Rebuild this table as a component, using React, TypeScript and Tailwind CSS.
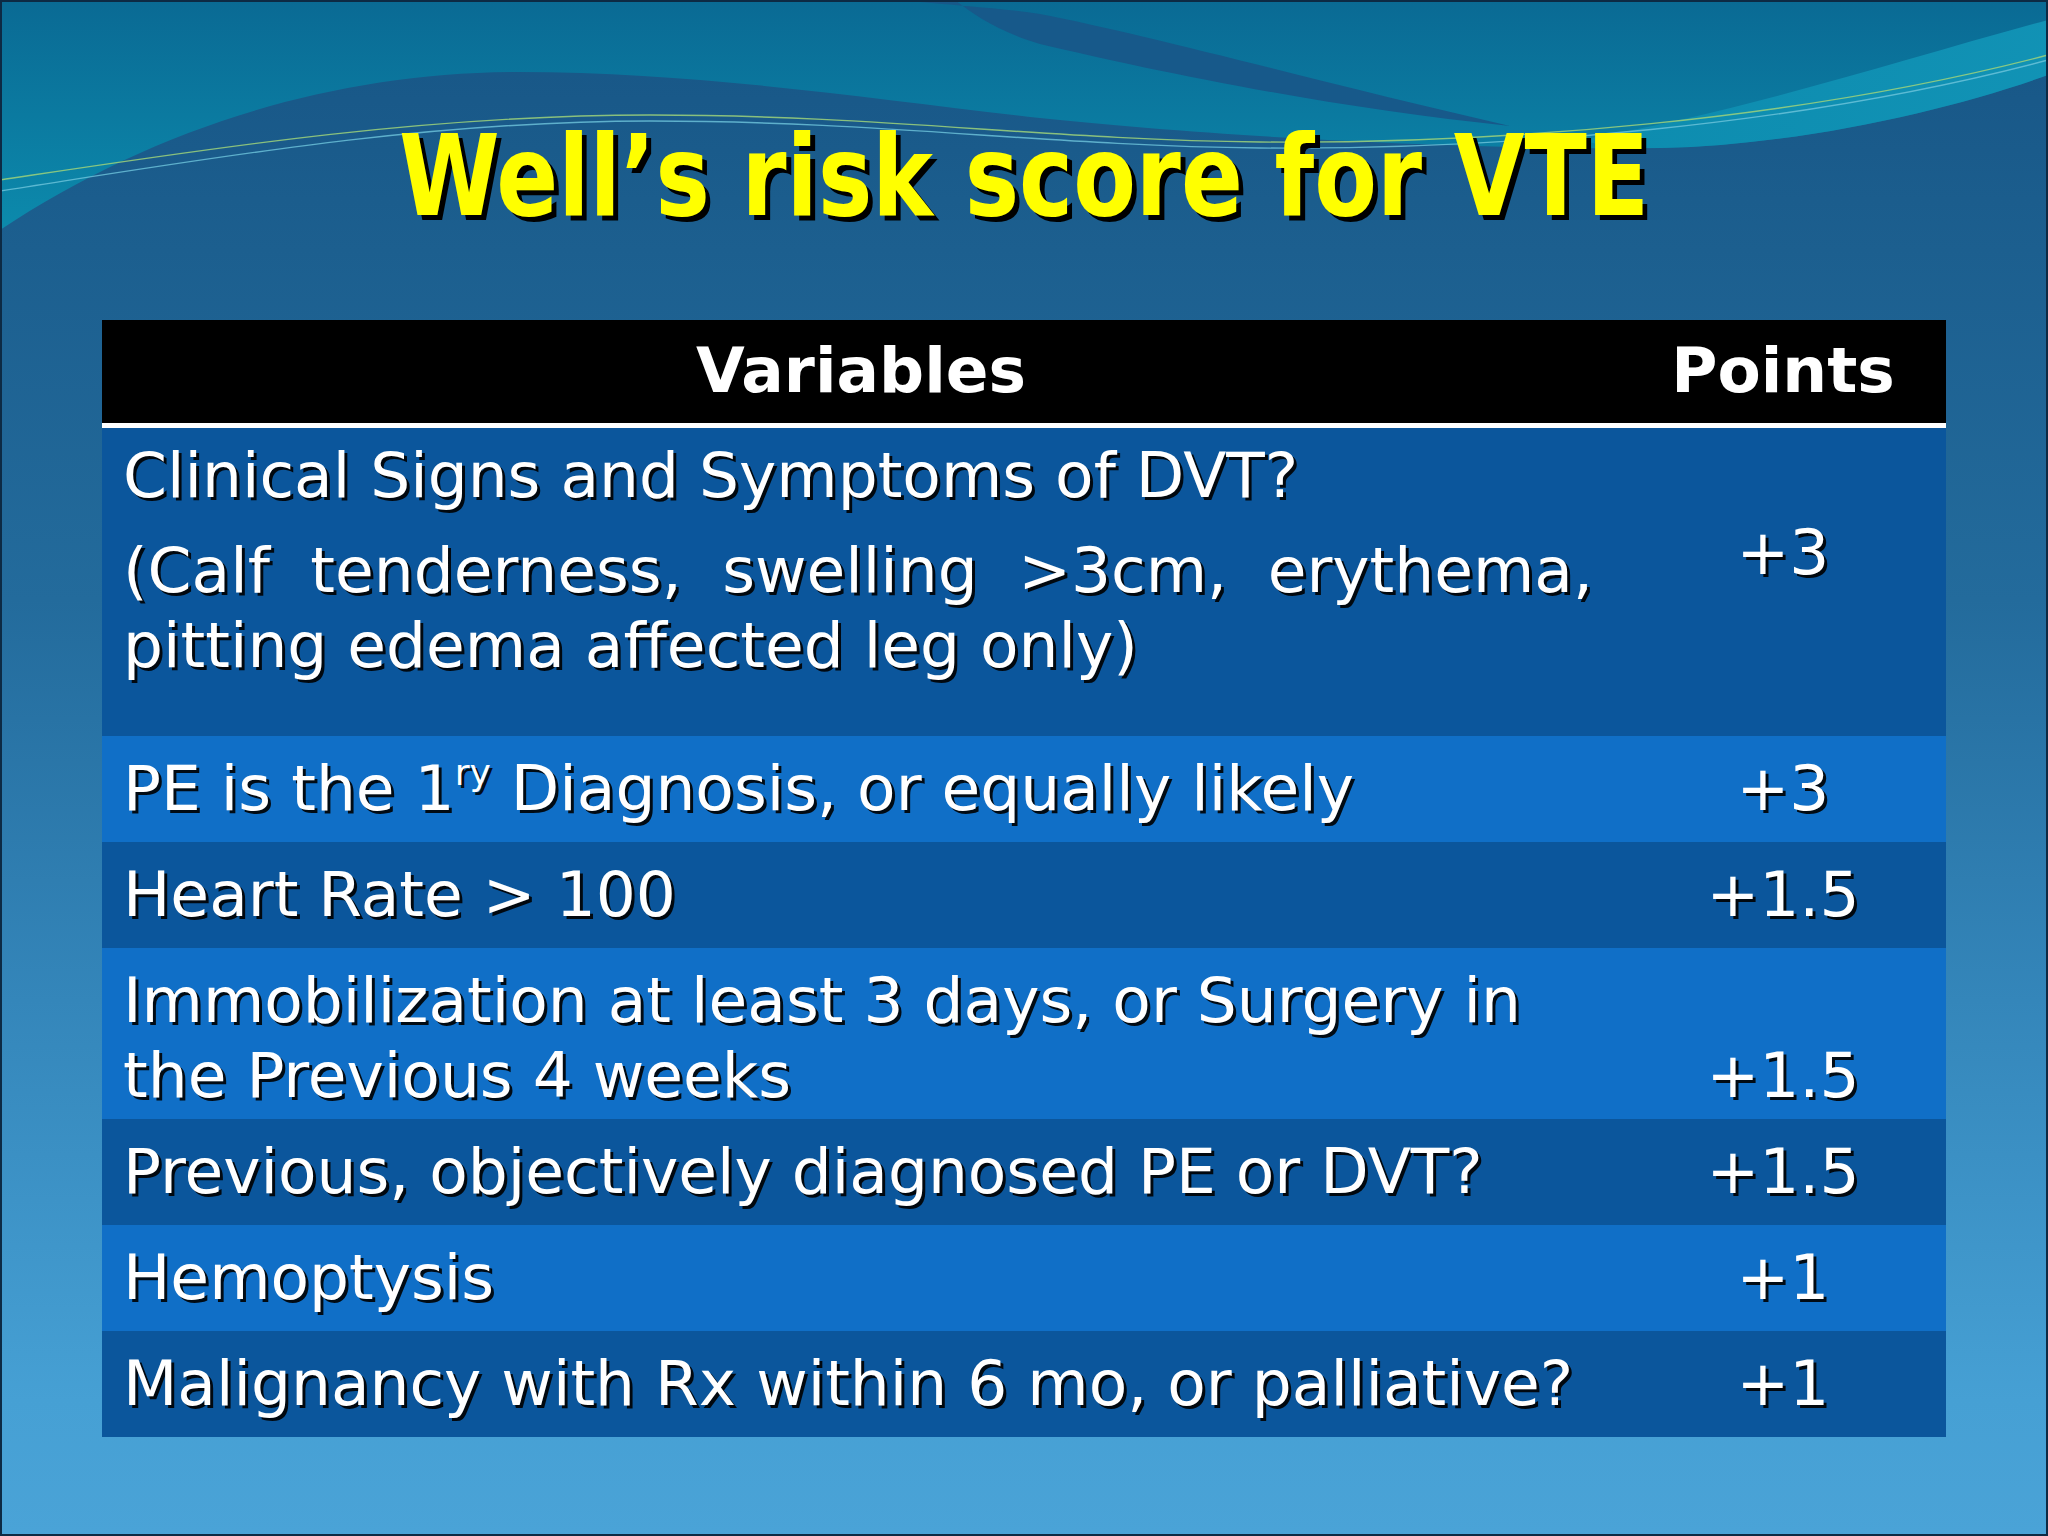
import React from "react";

const shadow = "[text-shadow:3px_3px_0_rgba(0,0,0,0.9)]";

function Background() {
  return (
    <svg
      className="absolute inset-0"
      width={2048}
      height={1536}
      viewBox="0 0 2048 1536"
      aria-hidden="true"
    >
      <defs>
        <linearGradient id="top" x1="0" y1="0" x2="0" y2="1">
          <stop offset="0" stopColor="#0a6a94" />
          <stop offset="1" stopColor="#0c8aac" />
        </linearGradient>
        <linearGradient id="band" x1="0" y1="0" x2="1" y2="0">
          <stop offset="0" stopColor="#0d8db0" />
          <stop offset="1" stopColor="#1296b8" />
        </linearGradient>
      </defs>
      <path
        d="M0,0 H2048 V75 C1950,110 1800,145 1661,148 C1450,150 1200,135 1040,118 C880,100 700,72 520,72 C330,72 150,130 0,230 Z"
        fill="url(#top)"
      />
      <path
        d="M1580,140 C1750,110 1900,60 2048,20 V75 C1950,110 1800,145 1661,148 C1630,148 1600,146 1580,140 Z"
        fill="url(#band)"
        opacity="0.9"
      />
      <path
        d="M900,0 C960,6 1000,8 1040,14 C1150,35 1330,85 1510,126 C1330,108 1150,70 1040,44 C1000,32 975,16 955,0 Z"
        fill="#17598a"
      />
      <path
        d="M0,180 C200,150 420,115 650,115 C880,115 1050,140 1260,142 C1500,144 1800,120 2048,55"
        fill="none"
        stroke="#9ed27a"
        strokeWidth="1.4"
        opacity="0.85"
      />
      <path
        d="M0,191 C200,160 420,121 650,121 C880,121 1050,146 1260,148 C1500,150 1800,126 2048,60"
        fill="none"
        stroke="#6fc6dc"
        strokeWidth="1.4"
        opacity="0.8"
      />
    </svg>
  );
}

type Row = {
  dark: boolean;
  h: string;
  content: React.ReactNode;
  points: string;
  ptop: string;
};

const rows: Row[] = [
  {
    dark: true,
    h: "h-[308px]",
    content: (
      <div className="pt-[10px]">
        <p>Clinical Signs and Symptoms of DVT?</p>
        <p className="mt-[20px] text-justify">
          (Calf tenderness, swelling &gt;3cm, erythema, pitting edema affected leg only)
        </p>
      </div>
    ),
    points: "+3",
    ptop: "pt-[87px]",
  },
  {
    dark: false,
    h: "h-[106px]",
    content: (
      <p className="pt-[15px]">
        PE is the 1
        <sup className="relative -top-[25px] align-baseline text-[36px]">ry</sup>{" "}
        Diagnosis, or equally likely
      </p>
    ),
    points: "+3",
    ptop: "pt-[15px]",
  },
  {
    dark: true,
    h: "h-[106px]",
    content: <p className="pt-[15px]">Heart Rate &gt; 100</p>,
    points: "+1.5",
    ptop: "pt-[15px]",
  },
  {
    dark: false,
    h: "h-[171px]",
    content: (
      <p className="pt-[15px]">
        Immobilization at least 3 days, or Surgery in the Previous 4 weeks
      </p>
    ),
    points: "+1.5",
    ptop: "pt-[90px]",
  },
  {
    dark: true,
    h: "h-[106px]",
    content: <p className="pt-[15px]">Previous, objectively diagnosed PE or DVT?</p>,
    points: "+1.5",
    ptop: "pt-[15px]",
  },
  {
    dark: false,
    h: "h-[106px]",
    content: <p className="pt-[15px]">Hemoptysis</p>,
    points: "+1",
    ptop: "pt-[15px]",
  },
  {
    dark: true,
    h: "h-[106px]",
    content: (
      <p className="pt-[15px]">Malignancy with Rx within 6 mo, or palliative?</p>
    ),
    points: "+1",
    ptop: "pt-[15px]",
  },
];

export default function App() {
  return (
    <div className="relative w-[2048px] h-[1536px] overflow-hidden bg-[linear-gradient(180deg,#175585_0px,#1c5f8f_250px,#236b9c_600px,#3486ba_1000px,#46a0d4_1400px,#4aa3d7_1536px)] font-['DejaVu_Sans',sans-serif]">
      <Background />
      <div className="absolute inset-0 border-2 border-[#0d2a44] pointer-events-none" />
      <div className="relative flex flex-col items-center">
        <h1 className="mt-[120px] h-[112px] text-[112px] leading-[112px] font-bold text-[#ffff00] whitespace-nowrap scale-x-[0.815] [text-shadow:6px_5px_0_#000]">
          Well’s risk score for VTE
        </h1>
        <div className="mt-[88px] w-[1844px] text-white text-[63px] leading-[75px]">
          <div className="grid grid-cols-[1518px_326px] h-[108px] bg-black border-b-[5px] border-white font-bold">
            <div className="text-center pt-[13px]">Variables</div>
            <div className="text-center pt-[13px]">Points</div>
          </div>
          {rows.map((r, i) => (
            <div
              key={i}
              className={`grid grid-cols-[1518px_326px] ${r.h} ${
                r.dark ? "bg-[#0b569c]" : "bg-[#106fc7]"
              } ${shadow}`}
            >
              <div className="pl-[21px] pr-[27px]">{r.content}</div>
              <div className={`text-center ${r.ptop}`}>{r.points}</div>
            </div>
          ))}
        </div>
      </div>
    </div>
  );
}
